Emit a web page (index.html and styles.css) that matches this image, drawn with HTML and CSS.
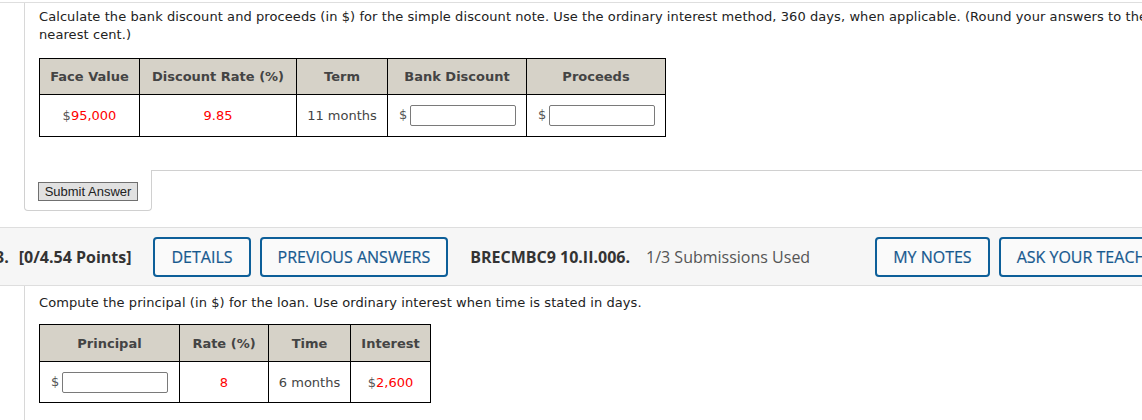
FILE: index.html
```html
<!DOCTYPE html>
<html>
<head>
<meta charset="utf-8">
<link rel="stylesheet" href="styles.css">
</head>
<body>
<div class="page">
  <div class="prevbar"></div>
  <div class="question">
    <div class="qcontent">
      <p class="prompt">Calculate the bank discount and proceeds (in $) for the simple discount note. Use the ordinary interest method, 360 days, when applicable. (Round your answers to the nearest cent.)</p>
      <table class="grid t1">
        <thead>
          <tr>
            <th class="c1">Face Value</th>
            <th class="c2">Discount Rate (%)</th>
            <th class="c3">Term</th>
            <th class="c4">Bank Discount</th>
            <th class="c5">Proceeds</th>
          </tr>
        </thead>
        <tbody>
          <tr>
            <td><span class="dol">$</span><span class="red">95,000</span></td>
            <td><span class="red">9.85</span></td>
            <td class="plain">11 months</td>
            <td class="inp"><span class="dol">$</span><span class="box"></span></td>
            <td class="inp"><span class="dol">$</span><span class="box"></span></td>
          </tr>
        </tbody>
      </table>
    </div>
    <div class="qfoot">
      <div class="tab"><button class="submit">Submit Answer</button></div>
      <div class="fill"></div>
    </div>
  </div>

  <div class="hbar">
    <span class="num">3.</span>
    <span class="pts">[0/4.54 Points]</span>
    <span class="btn">DETAILS</span>
    <span class="btn">PREVIOUS ANSWERS</span>
    <span class="code">BRECMBC9 10.II.006.</span>
    <span class="subs">1/3 Submissions Used</span>
    <span class="btn notes">MY NOTES</span>
    <span class="btn">ASK YOUR TEACHER</span>
  </div>

  <div class="question q2">
    <div class="qcontent2">
      <p class="prompt">Compute the principal (in $) for the loan. Use ordinary interest when time is stated in days.</p>
      <table class="grid t2">
        <thead>
          <tr>
            <th class="d1">Principal</th>
            <th class="d2">Rate (%)</th>
            <th class="d3">Time</th>
            <th class="d4">Interest</th>
          </tr>
        </thead>
        <tbody>
          <tr>
            <td class="inp"><span class="dol">$</span><span class="box"></span></td>
            <td><span class="red">8</span></td>
            <td class="plain">6 months</td>
            <td><span class="dol">$</span><span class="red">2,600</span></td>
          </tr>
        </tbody>
      </table>
    </div>
  </div>
</div>
</body>
</html>
```
FILE: styles.css
```css
html, body {
  margin: 0;
  padding: 0;
  background: #fff;
  overflow: hidden;
}
.page {
  width: 1400px;
  font-family: "DejaVu Sans", Verdana, sans-serif;
  font-size: 13px;
  color: #222;
}
.prevbar {
  height: 2px;
  border-bottom: 1px solid #dedede;
}
.question {
  margin-left: 24px;
}
.qcontent {
  border-left: 1px solid #d8d8d8;
  padding: 5px 0 33px 14px;
}
.prompt {
  margin: 0;
  line-height: 18px;
  width: 1120px;
  letter-spacing: 0.08px;
}
.t1 { margin-top: 14px; }
.grid {
  border-collapse: collapse;
  table-layout: fixed;
}
.grid th, .grid td {
  border: 1px solid #000;
  text-align: center;
  padding: 0;
}
.grid th {
  background: #d6d2c8;
  font-weight: bold;
  color: #444;
}
.t1 th { height: 35px; }
.t1 td { height: 41px; }
.c1 { width: 99px; }
.c2 { width: 156px; }
.c3 { width: 90px; }
.c4 { width: 138px; }
.c5 { width: 138px; }
.dol { color: #555; }
.red { color: #ff0000; }
.plain { color: #444; }
.grid td.inp {
  text-align: left;
  padding-left: 11px;
}
.box {
  display: inline-block;
  vertical-align: middle;
  width: 104px;
  height: 19px;
  border: 1px solid #7a7a7a;
  border-radius: 2px;
  margin-left: 3px;
  background: #fff;
}
.qfoot {
  display: flex;
}
.tab {
  width: 113px;
  border-left: 1px solid #d0d0d0;
  border-right: 1px solid #d0d0d0;
  border-bottom: 1px solid #d0d0d0;
  border-radius: 0 0 4px 4px;
  padding-left: 13px;
  padding-top: 12px;
  box-sizing: content-box;
  height: 28px;
}
.submit {
  font-family: "Liberation Sans", Arial, sans-serif;
  font-size: 13px;
  color: #222;
  background: #e1e1e1;
  border: 1px solid #707070;
  padding: 0 4px;
  height: 19px;
  width: 100px;
  line-height: 17px;
  margin: 0;
}
.fill {
  flex: 1;
  border-top: 1px solid #d0d0d0;
}
.hbar {
  margin-top: 16px;
  border-top: 1px solid #dedede;
  border-bottom: 1px solid #dedede;
  background: #f6f6f6;
  height: 57px;
  display: flex;
  align-items: center;
  font-family: "Open Sans", sans-serif;
  font-size: 16px;
  color: #333;
}
.num {
  font-weight: bold;
  margin-left: -5px;
}
.pts {
  font-weight: bold;
  margin-left: 10px;
  margin-right: 22px;
}
.btn {
  display: inline-flex;
  align-items: center;
  height: 36px;
  padding: 0 16px;
  border: 2px solid #0d5f99;
  border-radius: 4px;
  color: #17598f;
  margin-right: 9px;
  background: #fafafa;
  -webkit-text-stroke: 0.2px #17598f;
}
.code {
  font-weight: bold;
  margin-left: 13px;
}
.subs {
  color: #555;
  margin-left: 16px;
}
.notes {
  margin-left: 65px;
}
.q2 {
  border-left: 1px solid #d8d8d8;
}
.qcontent2 {
  padding: 8px 0 20px 14px;
}
.t2 { margin-top: 12px; }
.t2 th { height: 36px; }
.t2 td { height: 40px; }
.d1 { width: 139px; }
.d2 { width: 88px; }
.d3 { width: 81px; }
.d4 { width: 79px; }
```
